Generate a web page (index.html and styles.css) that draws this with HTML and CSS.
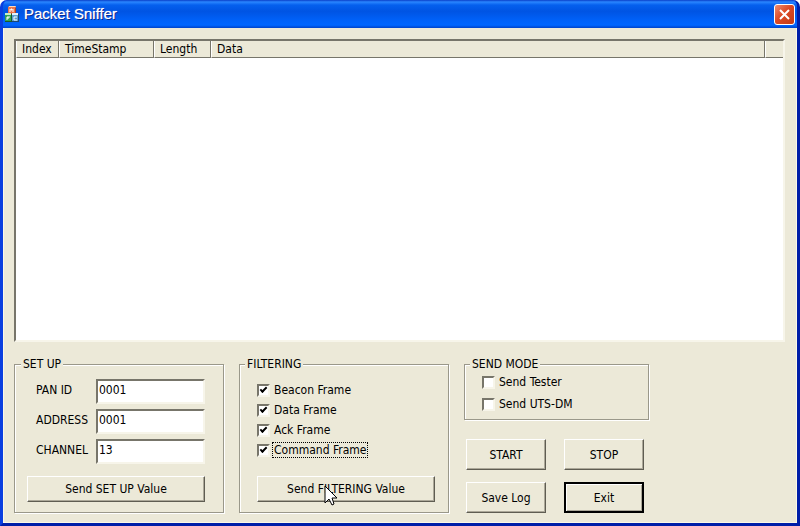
FILE: index.html
```
<!DOCTYPE html>
<html lang="en">
<head>
  <meta charset="UTF-8">
  <meta name="viewport" content="width=device-width, initial-scale=1.0">
  <title>Packet Sniffer</title>
  <link rel="stylesheet" href="styles.css">
</head>
<body>
  <div class="window">
    <header class="titlebar">
      <svg class="app-icon" width="14" height="16" viewBox="0 0 14 16">
        <path d="M3 1h8v7H3z" fill="#a8432a"/>
        <path d="M3 2l1-2h7l-1 2z" fill="#ffd9b8"/>
        <rect x="3" y="1" width="7" height="6" fill="#e8784e"/>
        <path d="M5 6V3M8 6V3M6 3h1v1H6z" fill="none" stroke="#fff"/>
        <path d="M0 8h7v8H0z" fill="#1b5a2c"/>
        <rect y="8" width="6" height="7" fill="#35a352"/>
        <path d="M0 8h6" stroke="#c5efc8" stroke-width="2"/>
        <path d="M2 14v-3h3M2 12h2" fill="none" stroke="#fff"/>
        <path d="M7 8h7v8H7z" fill="#1c4675"/>
        <rect x="7" y="8" width="6" height="7" fill="#5b9fd0"/>
        <path d="M7 8h6" stroke="#e0f1ff" stroke-width="2"/>
        <path d="M12 11H9v3h3" fill="none" stroke="#fff"/>
      </svg>
      <h1>Packet Sniffer</h1>
      <button class="close" aria-label="Close">
        <svg width="13" height="13" viewBox="0 0 13 13">
          <path d="M2 2l9 9M11 2l-9 9" stroke="#fff" stroke-width="2"/>
        </svg>
      </button>
    </header>

    <main class="client">
      <div class="list">
        <table>
          <thead>
            <tr>
              <th class="col-index">Index</th>
              <th class="col-time">TimeStamp</th>
              <th class="col-length">Length</th>
              <th>Data</th>
              <th class="col-end"></th>
            </tr>
          </thead>
        </table>
      </div>

      <div class="panels">
        <fieldset class="group">
          <legend>SET UP</legend>
          <div class="fields">
            <label for="panId">PAN ID</label>
            <input type="text" id="panId" value="0001">
            <label for="address">ADDRESS</label>
            <input type="text" id="address" value="0001">
            <label for="channel">CHANNEL</label>
            <input type="text" id="channel" value="13">
          </div>
          <button class="btn">Send SET UP Value</button>
        </fieldset>

        <fieldset class="group filtering">
          <legend>FILTERING</legend>
          <div class="checks">
            <label><input type="checkbox" checked><span>Beacon Frame</span></label>
            <label><input type="checkbox" checked><span>Data Frame</span></label>
            <label><input type="checkbox" checked><span>Ack Frame</span></label>
            <label><input type="checkbox" checked><span class="focused">Command Frame</span></label>
          </div>
          <button class="btn">Send FILTERING Value
            <svg class="pointer" width="13" height="21" viewBox="0 0 13 21">
              <path d="M1 1v17l4-4 3 6 2-1-2-6h5z" fill="#fff" stroke="#000"/>
            </svg>
          </button>
        </fieldset>

        <div class="side">
          <fieldset class="group mode">
            <legend>SEND MODE</legend>
            <div class="checks">
              <label><input type="checkbox"><span>Send Tester</span></label>
              <label><input type="checkbox"><span>Send UTS-DM</span></label>
            </div>
          </fieldset>
          <div class="actions">
            <button class="btn">START</button>
            <button class="btn">STOP</button>
            <button class="btn">Save Log</button>
            <button class="btn default">Exit</button>
          </div>
        </div>
      </div>
    </main>
  </div>
</body>
</html>
```

FILE: styles.css
```
* {
  box-sizing: border-box;
}
body {
  margin: 0;
  background-color: #fff;
  color: #000;
  font: 12px/14px "DejaVu Sans Condensed", "DejaVu Sans", sans-serif;
}
button, input {
  font: inherit;
  color: inherit;
}
.window {
  display: flex;
  flex-direction: column;
  min-height: 100vh;
  border: 3px solid #0a3fe0;
  border-top: none;
  border-right-color: #001ea8;
  border-bottom-color: #001ea8;
  border-radius: 7px 7px 0 0;
  background-color: #0a3fe0;
}

/* title bar */
.titlebar {
  display: flex;
  align-items: center;
  gap: 5px;
  height: 28px;
  padding: 0 2px;
  border-radius: 6px 6px 0 0;
  background: linear-gradient(#0a3fc8 0%, #2a86ff 7%, #0560ee 18%, #0054e3 40%, #0062fa 75%, #0066ff 90%, #0043c9 100%);
}
.titlebar h1 {
  flex: 1;
  margin: 0;
  color: #fff;
  font: 15px/18px "Liberation Sans", Arial, sans-serif;
  text-shadow: 1px 1px #0a2a90, 0 0 1px #fff;
}
.close {
  display: grid;
  place-items: center;
  width: 21px;
  height: 21px;
  padding: 0;
  border: 1px solid #fff;
  border-radius: 3px;
  background: linear-gradient(135deg, #ee8d70, #dc4a26 45%, #c33a14);
}

/* dialog area */
.client {
  flex: 1;
  display: flex;
  flex-direction: column;
  gap: 15px;
  padding: 11px 11px 9px 10px;
  border: 1px solid #fbf8e8;
  border-top: none;
  background-color: #ece9d8;
}
.list {
  flex: 1;
  min-height: 120px;
  border: 2px solid;
  border-color: #77756a #f7f5ea #f7f5ea #77756a;
  background-color: #fff;
}
table {
  width: 100%;
  border-collapse: separate;
  border-spacing: 0;
  table-layout: fixed;
}
th {
  height: 17px;
  padding: 0 0 0 5px;
  border-left: 1px solid #fff;
  border-right: 1px solid #77756a;
  border-bottom: 1px solid #77756a;
  background-color: #ece9d8;
  font-weight: normal;
  line-height: 16px;
  text-align: left;
}
.col-index {
  width: 43px;
}
.col-time {
  width: 95px;
}
.col-length {
  width: 57px;
}
.col-end {
  width: 18px;
  border-right: none;
}

/* group boxes */
.panels {
  display: flex;
  flex-wrap: wrap;
  gap: 15px;
}
.group {
  width: 210px;
  min-width: 0;
  margin: 0;
  padding: 8px 18px 8px 12px;
  border: 1px solid #9a988a;
  box-shadow: 1px 1px #fff, inset 1px 1px #fff;
}
.group.filtering {
  padding: 8px 13px 8px 17px;
}
legend {
  margin-left: -6px;
  padding: 0 2px;
  background-color: #ece9d8;
}
.filtering legend, .mode legend {
  margin-left: -12px;
}
.fields {
  display: grid;
  grid-template-columns: 60px 1fr;
  gap: 5px 0;
  margin: 0 0 12px 9px;
}
.fields label {
  line-height: 22px;
}
.fields input {
  width: 100%;
  height: 25px;
  padding: 0 2px 4px 1px;
  border: 2px solid;
  border-color: #77756a #f7f5ea #f7f5ea #77756a;
  border-radius: 0;
  background-color: #fff;
  outline: none;
}
.checks label {
  display: flex;
  align-items: center;
  gap: 2px;
  height: 20px;
}
.checks span {
  padding: 0 1px;
  border: 1px solid transparent;
}
.checks .focused {
  border: 1px dotted #000;
}
.checks input {
  appearance: none;
  width: 13px;
  height: 13px;
  margin: 0;
  border: 2px solid;
  border-color: #77756a #f7f5ea #f7f5ea #77756a;
  background-color: #fff;
}
.checks input:checked::after {
  content: "";
  display: block;
  width: 5px;
  height: 2px;
  margin: 1px;
  border: solid #000;
  border-width: 0 0 2px 2px;
  transform: rotate(-45deg);
}
.filtering .checks {
  margin: 1px 0 16px;
}

/* buttons */
.btn {
  position: relative;
  width: 100%;
  height: 26px;
  padding: 0;
  border: 1px solid;
  border-color: #fff #5f5d52 #5f5d52 #fff;
  border-radius: 0;
  background-color: #ece9d8;
  box-shadow: inset -1px -1px #aca899;
}
.btn.default {
  border: 2px solid #000;
  box-shadow: inset 1px 1px #fff, inset -1px -1px #aca899;
}
.pointer {
  position: absolute;
  left: 66px;
  top: 8px;
}
.side {
  width: 185px;
}
.group.mode {
  width: 100%;
  padding: 0 17px 4px;
}
.mode .checks label {
  height: 22px;
}
.actions {
  display: grid;
  grid-template-columns: 80px 80px;
  gap: 12px 18px;
  margin: 19px 0 0 2px;
}
.actions .btn {
  height: 31px;
}
```
